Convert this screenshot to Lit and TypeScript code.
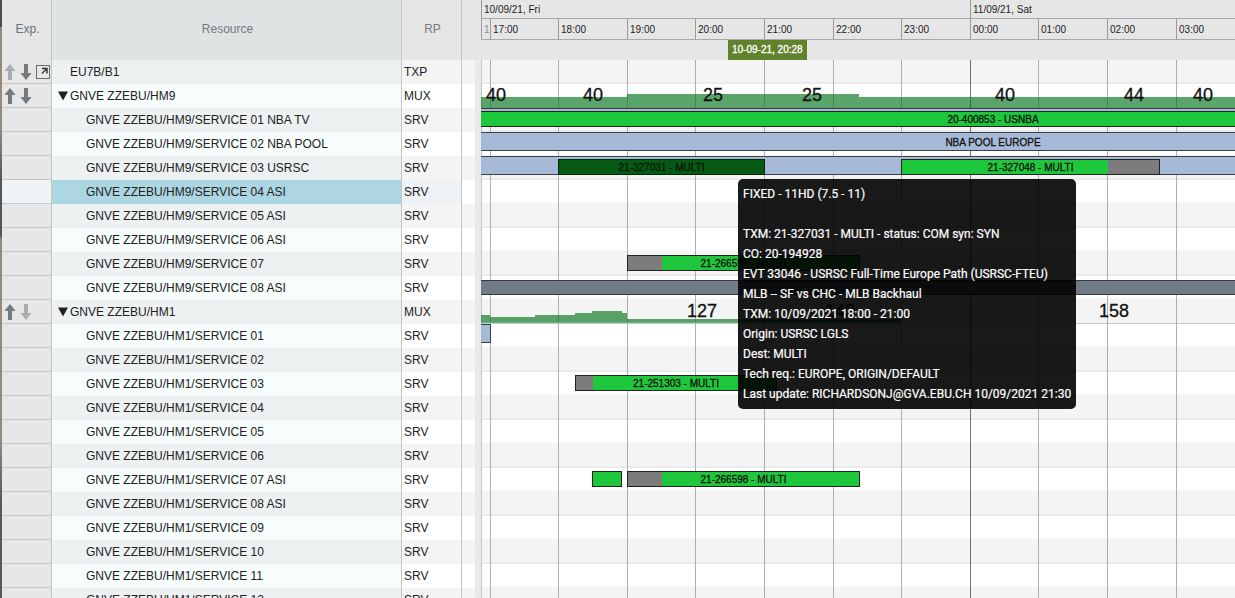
import { LitElement, html, css, svg, nothing } from "lit";
import { customElement, property, state } from "lit/decorators.js";
import { classMap } from "lit/directives/class-map.js";
import { styleMap } from "lit/directives/style-map.js";

const HOUR_WIDTH = 68.6;
const FIRST_HOUR = 17;
const LEAD = 9;

/** Horizontal position of an hour (counted from 00:00 on the first day). */
const xOf = (hour: number) => Math.floor(LEAD + (hour - FIRST_HOUR) * HOUR_WIDTH + 0.01);

interface Bar {
  from: number;
  to: number;
  kind: "tx" | "live" | "pool" | "down";
  label?: string;
  pre?: number;
  post?: number;
}
interface Level { from: number; to: number; height: number }
interface Total { at: number; value: string }
interface Row {
  name: string;
  rp: "TXP" | "MUX" | "SRV";
  selected?: boolean;
  up?: boolean;
  down?: boolean;
  moves?: boolean;
  popout?: boolean;
  bars?: Bar[];
  levels?: Level[];
  totals?: Total[];
  base?: boolean;
}

const srv = (name: string, extra: Partial<Row> = {}): Row => ({ name: `GNVE ZZEBU/${name}`, rp: "SRV", ...extra });

const ROWS: Row[] = [
  { name: "EU7B/B1", rp: "TXP", moves: true, down: true, popout: true },
  {
    name: "GNVE ZZEBU/HM9", rp: "MUX", moves: true, up: true, down: true,
    levels: [
      { from: 16.8, to: 19, height: 11 },
      { from: 19, to: 22.39, height: 14 },
      { from: 22.39, to: 36, height: 11 },
    ],
    totals: [
      { at: 17.08, value: "40" }, { at: 18.5, value: "40" }, { at: 20.24, value: "25" }, { at: 21.69, value: "25" },
      { at: 24.5, value: "40" }, { at: 26.38, value: "44" }, { at: 27.38, value: "40" },
    ],
  },
  srv("HM9/SERVICE 01 NBA TV", {
    bars: [
      { from: 16.8, to: 36, kind: "pool" },
      { from: 16.8, to: 31.87, kind: "tx", label: "20-400853 - USNBA" },
    ],
  }),
  srv("HM9/SERVICE 02 NBA POOL", { bars: [{ from: 16.8, to: 31.87, kind: "pool", label: "NBA POOL EUROPE" }] }),
  srv("HM9/SERVICE 03 USRSC", {
    bars: [
      { from: 16.8, to: 36, kind: "pool" },
      { from: 18, to: 21.02, kind: "live", label: "21-327031 - MULTI" },
      { from: 23, to: 26.78, kind: "tx", label: "21-327048 - MULTI", post: 0.75 },
    ],
  }),
  srv("HM9/SERVICE 04 ASI", { selected: true }),
  srv("HM9/SERVICE 05 ASI"),
  srv("HM9/SERVICE 06 ASI"),
  srv("HM9/SERVICE 07", { bars: [{ from: 19, to: 22.4, kind: "tx", label: "21-266597 - MULTI", pre: 0.5 }] }),
  srv("HM9/SERVICE 08 ASI", { bars: [{ from: 16.8, to: 36, kind: "down" }] }),
  {
    name: "GNVE ZZEBU/HM1", rp: "MUX", moves: true, up: true, base: true,
    levels: [
      { from: 16.8, to: 17, height: 7 },
      { from: 17, to: 17.67, height: 5 },
      { from: 17.67, to: 18.25, height: 7 },
      { from: 18.25, to: 18.5, height: 9 },
      { from: 18.5, to: 18.93, height: 11 },
      { from: 18.93, to: 19, height: 9 },
      { from: 19, to: 23, height: 3 },
    ],
    totals: [{ at: 20.08, value: "127" }, { at: 22.1, value: "142" }, { at: 26.09, value: "158" }],
  },
  srv("HM1/SERVICE 01", { bars: [{ from: 16.8, to: 17.02, kind: "pool" }] }),
  srv("HM1/SERVICE 02"),
  srv("HM1/SERVICE 03", { bars: [{ from: 18.25, to: 21.19, kind: "tx", label: "21-251303 - MULTI", pre: 0.25 }] }),
  srv("HM1/SERVICE 04"),
  srv("HM1/SERVICE 05"),
  srv("HM1/SERVICE 06"),
  srv("HM1/SERVICE 07 ASI", {
    bars: [
      { from: 18.5, to: 18.93, kind: "tx" },
      { from: 19, to: 22.4, kind: "tx", label: "21-266598 - MULTI", pre: 0.5 },
    ],
  }),
  srv("HM1/SERVICE 08 ASI"),
  srv("HM1/SERVICE 09"),
  srv("HM1/SERVICE 10"),
  srv("HM1/SERVICE 11"),
  srv("HM1/SERVICE 12"),
];

const HOURS = Array.from({ length: 24 }, (_, i) => FIRST_HOUR + i);
const px = (n: number) => `${n}px`;

const arrow = (flip: boolean) => html`
  <svg width="12" height="16" viewBox="0 0 12 16" aria-hidden="true">
    ${flip
      ? svg`<path d="M4 0h4v9h3.6L6 16 .4 9H4z" fill="currentColor"/>`
      : svg`<path d="M6 0l5.6 7H8v9H4V7H.4z" fill="currentColor"/>`}
  </svg>`;

@customElement("resource-table")
class ResourceTable extends LitElement {
  @property({ attribute: false }) rows: Row[] = [];

  static styles = css`
    :host { display: block; }
    .table { width: 100%; table-layout: fixed; border-collapse: separate; border-spacing: 0; font-size: 12px; line-height: 16px; color: #222; }
    .exp { width: 50px; }
    .rp { width: 60px; }
    .pad { width: 13px; }
    th { height: 60px; padding: 0 0 2px 2px; box-sizing: border-box; background: #e6e6e6; color: #75797d; font-weight: 400; text-align: center; border-right: 1px solid #c4c6c6; }
    th.name { background: #dee3e4; }
    th.last, td.last { border-right: 0; }
    th.exp { color: #66717a; }
    td { height: 24px; padding: 0; box-sizing: border-box; background: #fff; border-right: 1px solid #c4c6c6; white-space: nowrap; overflow: hidden; }
    .odd td { background: #f4f4f4; }
    td.name { background: #f6fdfc; }
    .odd td.name { background: #eef1f2; }
    tr td.tools { background: #e7e7e7; border-bottom: 1px solid #c6c8c8; }
    .selected td.tools { background: #eff3f5; border-bottom-color: #b9cfd6; }
    .selected td.name { background: #acd6e2; }
    .selected td.code { background: #eef2f4; }
    td.code { padding-left: 2px; }
    .toolbar { display: flex; align-items: center; gap: 4px; padding-left: 2px; }
    .icon { display: flex; padding: 0; border: 0; background: none; font: inherit; color: #74797d; cursor: pointer; }
    .icon:disabled { color: #aaadb0; }
    .label { display: flex; align-items: center; gap: 2px; padding-left: 34px; }
    .label.top { padding-left: 18px; }
    .label.group { padding-left: 6px; }
  `;

  render() {
    return html`
      <table class="table">
        <thead>
          <tr>
            <th class="exp" scope="col">Exp.</th>
            <th class="name" scope="col">Resource</th>
            <th class="rp" scope="col">RP</th>
            <th class="pad last"></th>
          </tr>
        </thead>
        <tbody>
          ${this.rows.map((r, i) => html`
            <tr class=${classMap({ odd: i % 2 === 0, selected: !!r.selected })}>
              <td class="tools">
                ${r.moves ? html`
                  <div class="toolbar">
                    <button class="icon" aria-label="Move up" ?disabled=${!r.up}>${arrow(false)}</button>
                    <button class="icon" aria-label="Move down" ?disabled=${!r.down}>${arrow(true)}</button>
                    ${r.popout ? html`
                      <button class="icon" aria-label="Open in window">
                        <svg width="14" height="14" viewBox="0 0 14 14" fill="none" aria-hidden="true">
                          <rect x=".5" y=".5" width="13" height="13" fill="#e8e8e8" stroke="#666b70"/>
                          <path d="M6 3.5h5v5M11 3.5L6 8.5" stroke="#333" stroke-width="1.4"/>
                        </svg>
                      </button>` : nothing}
                  </div>` : nothing}
              </td>
              <td class="name">
                <div class=${classMap({ label: true, top: r.rp === "TXP", group: r.rp === "MUX" })}>
                  ${r.rp === "MUX" ? html`
                    <button class="icon" aria-label="Collapse" aria-expanded="true">
                      <svg width="10" height="10" viewBox="0 0 10 10" aria-hidden="true"><path d="M0 .5h10L5 9.5z" fill="#222"/></svg>
                    </button>` : nothing}
                  <span>${r.name}</span>
                </div>
              </td>
              <td class="code">${r.rp}</td>
              <td class="last"></td>
            </tr>`)}
        </tbody>
      </table>`;
  }
}

@customElement("time-chart")
class TimeChart extends LitElement {
  @property({ attribute: false }) rows: Row[] = [];

  static styles = css`
    :host { display: block; position: relative; overflow: hidden; }
    .head { height: 60px; background: #e6e6e6; font-size: 10px; color: #222; }
    .days, .hours { display: flex; box-sizing: border-box; border-bottom: 1px solid #a8a8a8; white-space: nowrap; }
    .days { height: 19px; line-height: 20px; }
    .hours { height: 21px; line-height: 22px; }
    .cell { flex: none; box-sizing: border-box; padding-left: 2px; border-left: 1px solid #9a9a9a; overflow: hidden; }
    .cut { color: #8a8a8a; }
    .now { position: absolute; top: 40px; z-index: 3; padding: 0 4px; line-height: 20px; background: #5f832b; color: #fff; font-size: 10px; white-space: nowrap; -webkit-text-stroke: 0.3px currentColor; }
    .body { position: relative; border-left: 1px solid #c6c8c8; }
    .row { position: relative; height: 24px; box-sizing: border-box; background: #fff; border-bottom: 2px solid #f6f6f6; }
    .row.odd { background: #f4f4f4; border-bottom-color: #ebebeb; }
    .row.base { border-bottom: 1px solid #c4c8c6; }
    .lines { position: absolute; inset: 0; z-index: 1; pointer-events: none; }
    .line { position: absolute; top: 0; bottom: 0; width: 1px; background: #aeb0b0; }
    .line.midnight { background: #77726e; }
    .bar { position: absolute; z-index: 2; top: 3px; height: 16px; box-sizing: border-box; display: flex; align-items: stretch; border: 1px solid #222; font-size: 10px; line-height: 15px; color: #111; }
    .tx { background: #1fc73c; }
    .live { background: #075a14; border-color: #022a08; color: #02180a; }
    .pool { top: 0; height: 19px; line-height: 19px; background: #a6bad7; border-color: #3a3f48; }
    .down { top: 4px; height: 15px; background: #717b85; border-color: #333a40; }
    .text { position: absolute; inset: 0; text-align: center; white-space: nowrap; -webkit-text-stroke: 0.3px currentColor; }
    .buffer { background: repeating-conic-gradient(#8c847c 0 25%, #6f747c 0 50%) 0 0 / 2px 2px; }
    .post { margin-left: auto; }
    .level { position: absolute; z-index: 2; bottom: -2px; background: rgba(3, 117, 27, 0.65); }
    .base .level { bottom: 0; border-bottom: 1px solid #6fae7c; }
    .total { position: absolute; z-index: 2; top: 0; font-size: 18px; line-height: 22px; color: #111; transform: translateX(-50%); -webkit-text-stroke: 0.3px currentColor; }
  `;

  private bar(b: Bar) {
    const left = xOf(b.from) - 1;
    return html`
      <div class="bar ${b.kind}" style=${styleMap({ left: px(left), width: px(xOf(b.to) - left - 1) })}>
        ${b.pre ? html`<div class="buffer" style=${styleMap({ width: px(Math.round(b.pre * HOUR_WIDTH)) })}></div>` : nothing}
        ${b.post ? html`<div class="buffer post" style=${styleMap({ width: px(Math.round(b.post * HOUR_WIDTH)) })}></div>` : nothing}
        ${b.label ? html`<span class="text">${b.label}</span>` : nothing}
      </div>`;
  }

  render() {
    const split = xOf(24);
    return html`
      <div class="head">
        <div class="days">
          <div class="cell" style=${styleMap({ width: px(split) })}>10/09/21, Fri</div>
          <div class="cell" style=${styleMap({ width: px(xOf(48) - split) })}>11/09/21, Sat</div>
        </div>
        <div class="hours">
          <div class="cell cut" style=${styleMap({ width: px(LEAD) })}>1</div>
          ${HOURS.map((h) => html`
            <div class="cell" style=${styleMap({ width: px(xOf(h + 1) - xOf(h)) })}>${String(h % 24).padStart(2, "0")}:00</div>`)}
        </div>
      </div>
      <div class="now" style=${styleMap({ left: px(xOf(20.475)) })}>10-09-21, 20:28</div>
      <div class="body">
        <div class="lines">
          ${HOURS.map((h) => html`
            <div class=${classMap({ line: true, midnight: h === 24 })} style=${styleMap({ left: px(xOf(h) - 1) })}></div>`)}
        </div>
        ${this.rows.map((r, i) => html`
          <div class=${classMap({ row: true, odd: i % 2 === 0, base: !!r.base })}>
            ${r.levels?.map((l) => html`
              <div class="level" style=${styleMap({ left: px(xOf(l.from) - 1), width: px(xOf(l.to) - xOf(l.from)), height: px(l.height) })}></div>`)}
            ${r.totals?.map((t) => html`<span class="total" style=${styleMap({ left: px(xOf(t.at)) })}>${t.value}</span>`)}
            ${r.bars?.map((b) => this.bar(b))}
          </div>`)}
      </div>`;
  }
}

@customElement("app-root")
class AppRoot extends LitElement {
  @state() private details = [
    "FIXED - 11HD (7.5 - 11)",
    "",
    "TXM: 21-327031 - MULTI - status: COM syn: SYN",
    "CO: 20-194928",
    "EVT 33046 - USRSC Full-Time Europe Path (USRSC-FTEU)",
    "MLB -- SF vs CHC - MLB Backhaul",
    "TXM: 10/09/2021 18:00 - 21:00",
    "Origin: USRSC LGLS",
    "Dest: MULTI",
    "Tech req.: EUROPE, ORIGIN/DEFAULT",
    "Last update: RICHARDSONJ@GVA.EBU.CH 10/09/2021 21:30",
  ];

  static styles = css`
    :host { display: block; height: 100vh; overflow: hidden; position: relative; font-family: "Liberation Sans", Arial, sans-serif; }
    .page { display: grid; grid-template-columns: 2px 473px 6px minmax(0, 1fr); }
    .edge { background: linear-gradient(#4b4c50 0 27px, #97887c 27px 130px, #55565a 180px 235px, #97887c 240px 440px, #5c5a58 500px); }
    .splitter { background: linear-gradient(#e6e6e6 0 60px, #e9ebea 60px); }
    .tooltip { position: absolute; z-index: 10; left: 738px; top: 179px; padding: 5px; border-radius: 5px; background: rgba(0, 0, 0, 0.9); color: #fff; font-family: Roboto, sans-serif; font-size: 12px; line-height: 20px; white-space: nowrap; -webkit-text-stroke: 0.2px currentColor; }
    .entry { min-height: 20px; }
  `;

  render() {
    return html`
      <main class="page">
        <div class="edge"></div>
        <resource-table .rows=${ROWS}></resource-table>
        <div class="splitter"></div>
        <time-chart .rows=${ROWS}></time-chart>
      </main>
      <div class="tooltip" role="tooltip">
        ${this.details.map((line) => html`<div class="entry">${line}</div>`)}
      </div>`;
  }
}
